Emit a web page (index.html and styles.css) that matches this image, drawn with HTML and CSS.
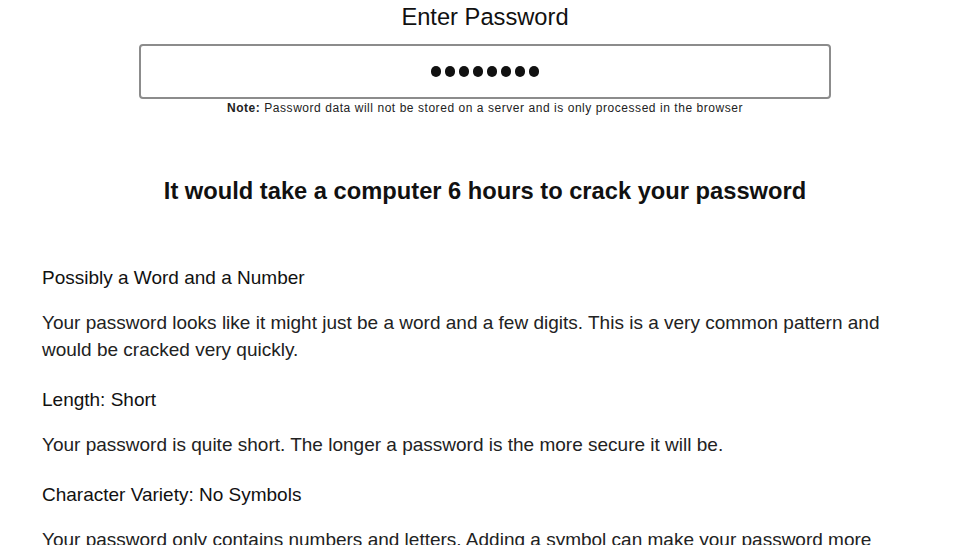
FILE: index.html
```html
<!DOCTYPE html>
<html>
<head>
<meta charset="utf-8">
<link rel="stylesheet" href="styles.css">
</head>
<body>
<div class="page">
  <div class="entry">
    <div class="entry-title">Enter Password</div>
    <div class="pw-box" aria-label="password">
      <span class="dot"></span><span class="dot"></span><span class="dot"></span><span class="dot"></span><span class="dot"></span><span class="dot"></span><span class="dot"></span><span class="dot"></span>
    </div>
    <div class="note"><b>Note:</b> Password data will not be stored on a server and is only processed in the browser</div>
  </div>
  <h1 class="result">It would take a computer 6 hours to crack your password</h1>
  <div class="checks">
    <div class="label">Possibly a Word and a Number</div>
    <p class="desc">Your password looks like it might just be a word and a few digits. This is a very common pattern and would be cracked very quickly.</p>
    <div class="label">Length: Short</div>
    <p class="desc">Your password is quite short. The longer a password is the more secure it will be.</p>
    <div class="label">Character Variety: No Symbols</div>
    <p class="desc">Your password only contains numbers and letters. Adding a symbol can make your password more secure.</p>
  </div>
</div>
</body>
</html>
```
FILE: styles.css
```css
html, body {
  margin: 0;
  padding: 0;
  background: #fff;
}
body {
  font-family: "Liberation Sans", Arial, sans-serif;
  color: #111;
  overflow: hidden;
}
.page {
  width: 970px;
}
.entry {
  display: flex;
  flex-direction: column;
  align-items: center;
  padding-top: 4px;
}
.entry-title {
  font-size: 23.7px;
  line-height: 27px;
  color: #111;
}
.pw-box {
  box-sizing: border-box;
  width: 692px;
  height: 55px;
  margin-top: 13px;
  border: 2px solid #8c8c8c;
  border-radius: 4px;
  display: flex;
  align-items: center;
  justify-content: center;
  gap: 3.5px;
}
.dot {
  width: 10.5px;
  height: 10.5px;
  border-radius: 50%;
  background: #111;
}
.note {
  font-size: 12px;
  line-height: 14px;
  letter-spacing: 0.55px;
  color: #222;
  margin-top: 2px;
}
.result {
  margin: 61px 0 0;
  text-align: center;
  font-size: 23.7px;
  line-height: 30px;
  font-weight: bold;
  color: #111;
}
.checks {
  padding: 58px 42px 0;
}
.label {
  font-size: 19px;
  line-height: 27px;
  margin-bottom: 18px;
  color: #111;
}
.desc {
  font-size: 19px;
  line-height: 27px;
  margin: 0 0 23px;
  color: #222;
  max-width: 880px;
}
```
